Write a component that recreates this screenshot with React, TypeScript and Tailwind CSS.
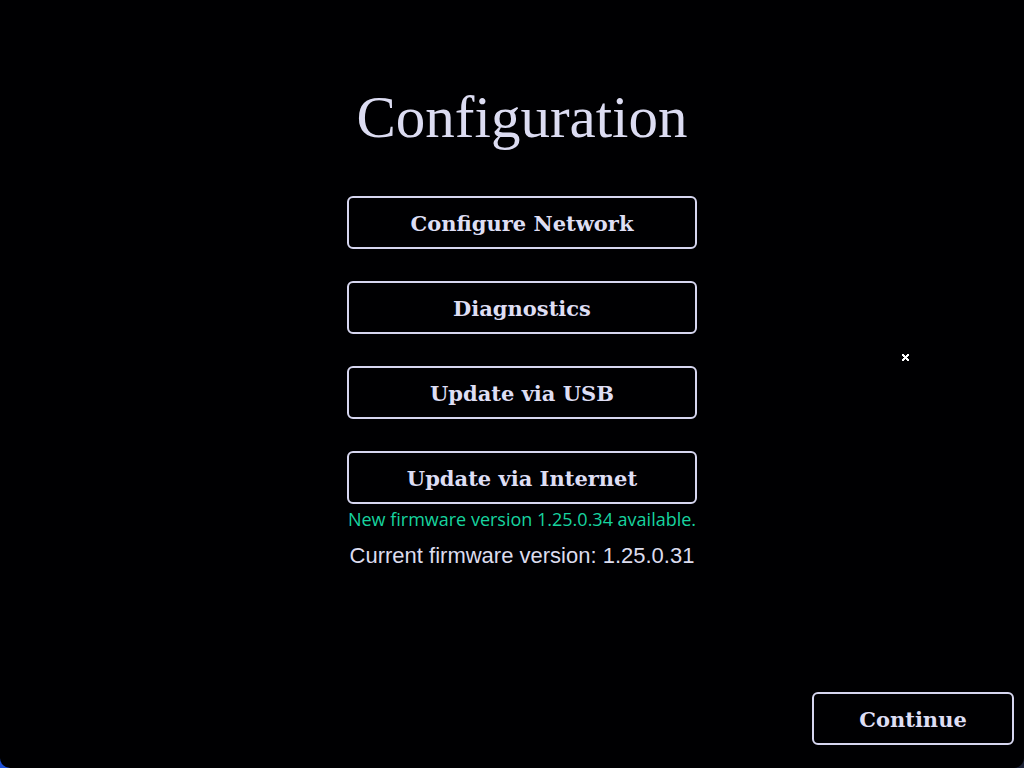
import React from 'react';

const menuItems = ['Configure Network', 'Diagnostics', 'Update via USB', 'Update via Internet'];

const slab = "font-['DejaVu_Serif',serif]";

const App: React.FC = () => {
  return (
    <div className="relative h-screen w-full overflow-hidden bg-gradient-to-r from-[#1d4fd8] via-[#0b1530] to-[#1c2236]">
      <div className="flex h-full flex-col rounded-b-[10px] bg-[#000002]">
        <div className="flex flex-col items-center pl-[20px]">
          <h1 className="mt-[81px] font-['Liberation_Serif',serif] text-[59px] leading-[72px] text-[#dcdcf2]">
            Configuration
          </h1>

          <div className="mt-[43px] flex flex-col items-center">
            {menuItems.map((label, i) => (
              <button
                key={label}
                className={`${slab} h-[53px] w-[350px] rounded-[6px] border-2 border-[#d6d6f0] pt-[3px] text-[21px] font-bold text-[#dedef4] ${
                  i > 0 ? 'mt-[32px]' : ''
                }`}
              >
                {label}
              </button>
            ))}
            <p className="mt-[3px] font-['Open_Sans',sans-serif] text-[18px] leading-[24px] text-[#17d39f]">
              New firmware version 1.25.0.34 available.
            </p>
            <p className="mt-[12px] font-['Liberation_Sans',sans-serif] text-[22px] leading-[26px] text-[#dcdcee]">
              Current firmware version: 1.25.0.31
            </p>
          </div>
        </div>

        <div className="mt-auto flex justify-end pb-[23px] pr-[10px]">
          <button
            className={`${slab} h-[53px] w-[202px] rounded-[6px] border-2 border-[#d6d6f0] pt-[3px] text-[21px] font-bold text-[#dedef4]`}
          >
            Continue
          </button>
        </div>
      </div>

      {/* mouse cursor */}
      <svg className="absolute left-[901px] top-[353px]" width="9" height="9" viewBox="0 0 9 9">
        <path d="M1 1h2v1h1v1h1V2h1V1h2v2H7v1H6v1h1v1h1v2H6V7H5V6H4v1H3v1H1V6h1V5h1V4H2V3H1z" fill="#fff" />
      </svg>
    </div>
  );
};

export default App;
